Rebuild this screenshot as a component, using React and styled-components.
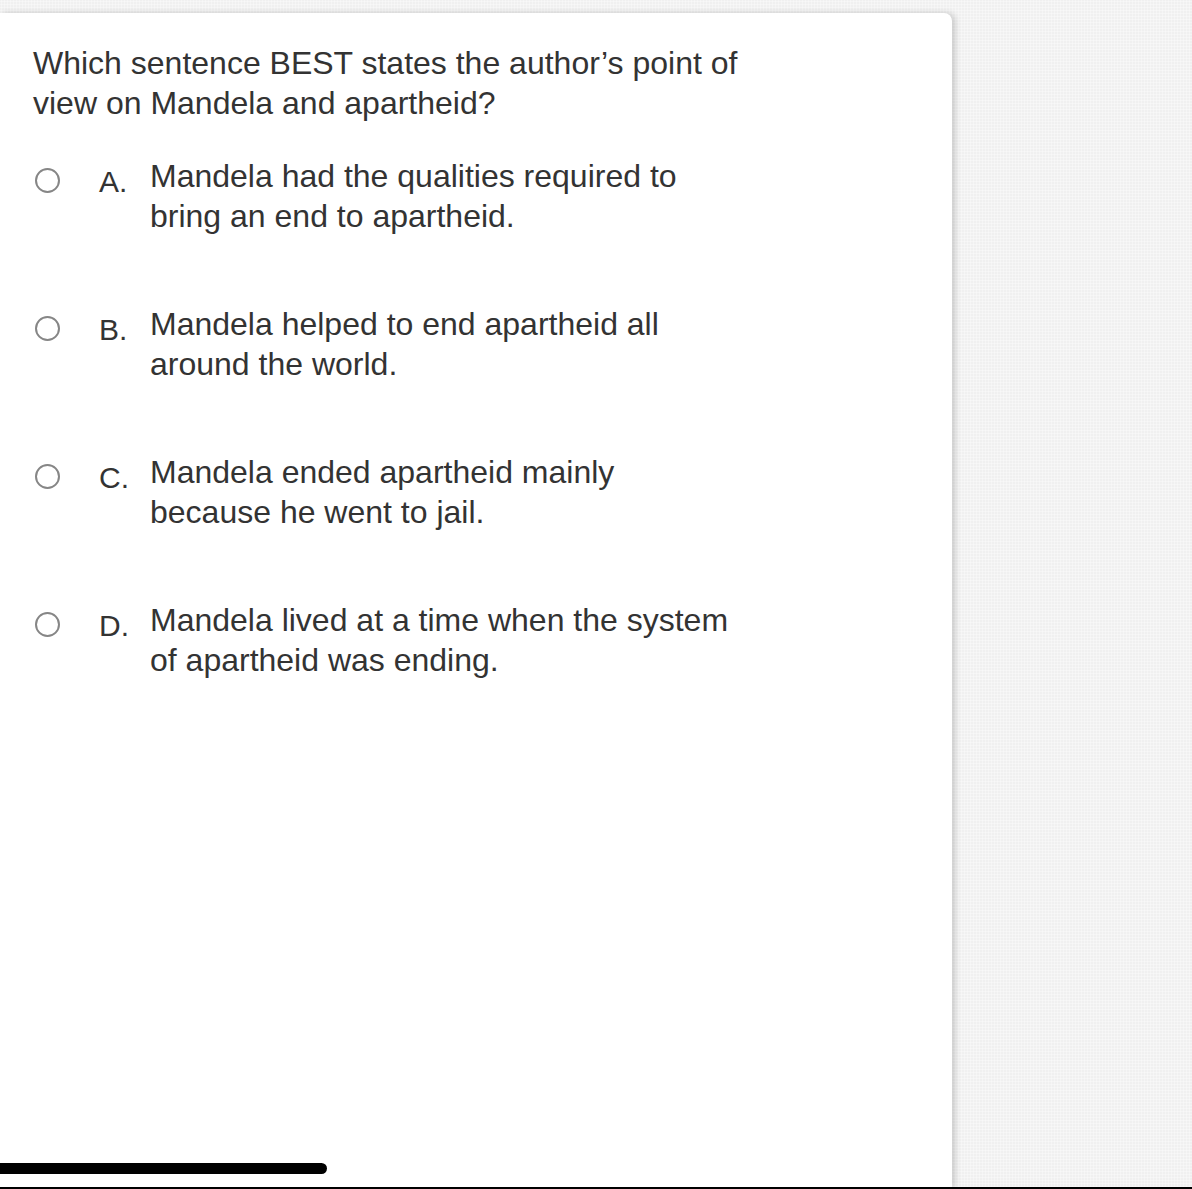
import React from 'react';
import styled, { createGlobalStyle } from 'styled-components';

const GlobalStyle = createGlobalStyle`
  html, body {
    margin: 0;
    padding: 0;
  }

  body {
    font-family: 'Liberation Sans', Arial, Helvetica, sans-serif;
    background-color: #f2f2f2;
  }
`;

const Page = styled.div`
  display: flex;
  flex-direction: column;

  height: 1189px;
  padding-top: 13px;
  box-sizing: border-box;

  background-color: #f2f2f2;
  background-image: radial-gradient(rgba(255, 255, 255, 0.45) 0.8px, transparent 1.4px),
    radial-gradient(rgba(0, 0, 0, 0.015) 0.8px, transparent 1.4px);
  background-size: 3px 3px, 3px 3px;
  background-position: 0 0, 1.5px 1.5px;

  border-bottom: 2px solid #000;
`;

const Card = styled.div`
  display: flex;
  flex-direction: column;

  flex: 1;
  width: 952px;

  background-color: #fff;
  border-top-right-radius: 8px;
  box-shadow: 3px 0 6px rgba(0, 0, 0, 0.18);
`;

const Content = styled.div`
  flex: 1;
  padding: 30px 0 0 33px;
`;

const Question = styled.div`
  width: 740px;

  color: #333;
  font-size: 32px;
  line-height: 40px;
`;

const OptionList = styled.div`
  display: flex;
  flex-direction: column;
  gap: 68px;

  margin-top: 33px;
`;

const Option = styled.label`
  display: flex;
  flex-direction: row;
  align-items: flex-start;

  cursor: pointer;
`;

const Radio = styled.span`
  flex: none;

  width: 25px;
  height: 25px;
  box-sizing: border-box;

  margin: 12px 39px 0 2px;

  border: 2.5px solid #868686;
  border-radius: 50%;
  background-color: #fff;
`;

const Letter = styled.span`
  flex: none;
  width: 51px;
  padding-top: 6px;

  color: #333;
  font-size: 30px;
  line-height: 40px;
`;

const OptionText = styled.span`
  width: 585px;

  color: #333;
  font-size: 32px;
  line-height: 40px;
`;

const ProgressTrack = styled.div`
  height: 11px;
  margin-bottom: 13px;
`;

const ProgressBar = styled.div`
  height: 100%;
  background-color: #000;
  border-radius: 0 6px 6px 0;
`;

const options = [
  { letter: 'A.', text: 'Mandela had the qualities required to bring an end to apartheid.' },
  { letter: 'B.', text: 'Mandela helped to end apartheid all around the world.' },
  { letter: 'C.', text: 'Mandela ended apartheid mainly because he went to jail.' },
  { letter: 'D.', text: 'Mandela lived at a time when the system of apartheid was ending.' },
];

function App() {
  return (
    <>
      <GlobalStyle />
      <Page>
        <Card>
          <Content>
            <Question>
              Which sentence BEST states the author’s point of view on Mandela and apartheid?
            </Question>
            <OptionList>
              {options.map((option) => (
                <Option key={option.letter}>
                  <Radio />
                  <Letter>{option.letter}</Letter>
                  <OptionText>{option.text}</OptionText>
                </Option>
              ))}
            </OptionList>
          </Content>
          <ProgressTrack>
            <ProgressBar style={{ width: 327 }} />
          </ProgressTrack>
        </Card>
      </Page>
    </>
  );
}

export default App;
